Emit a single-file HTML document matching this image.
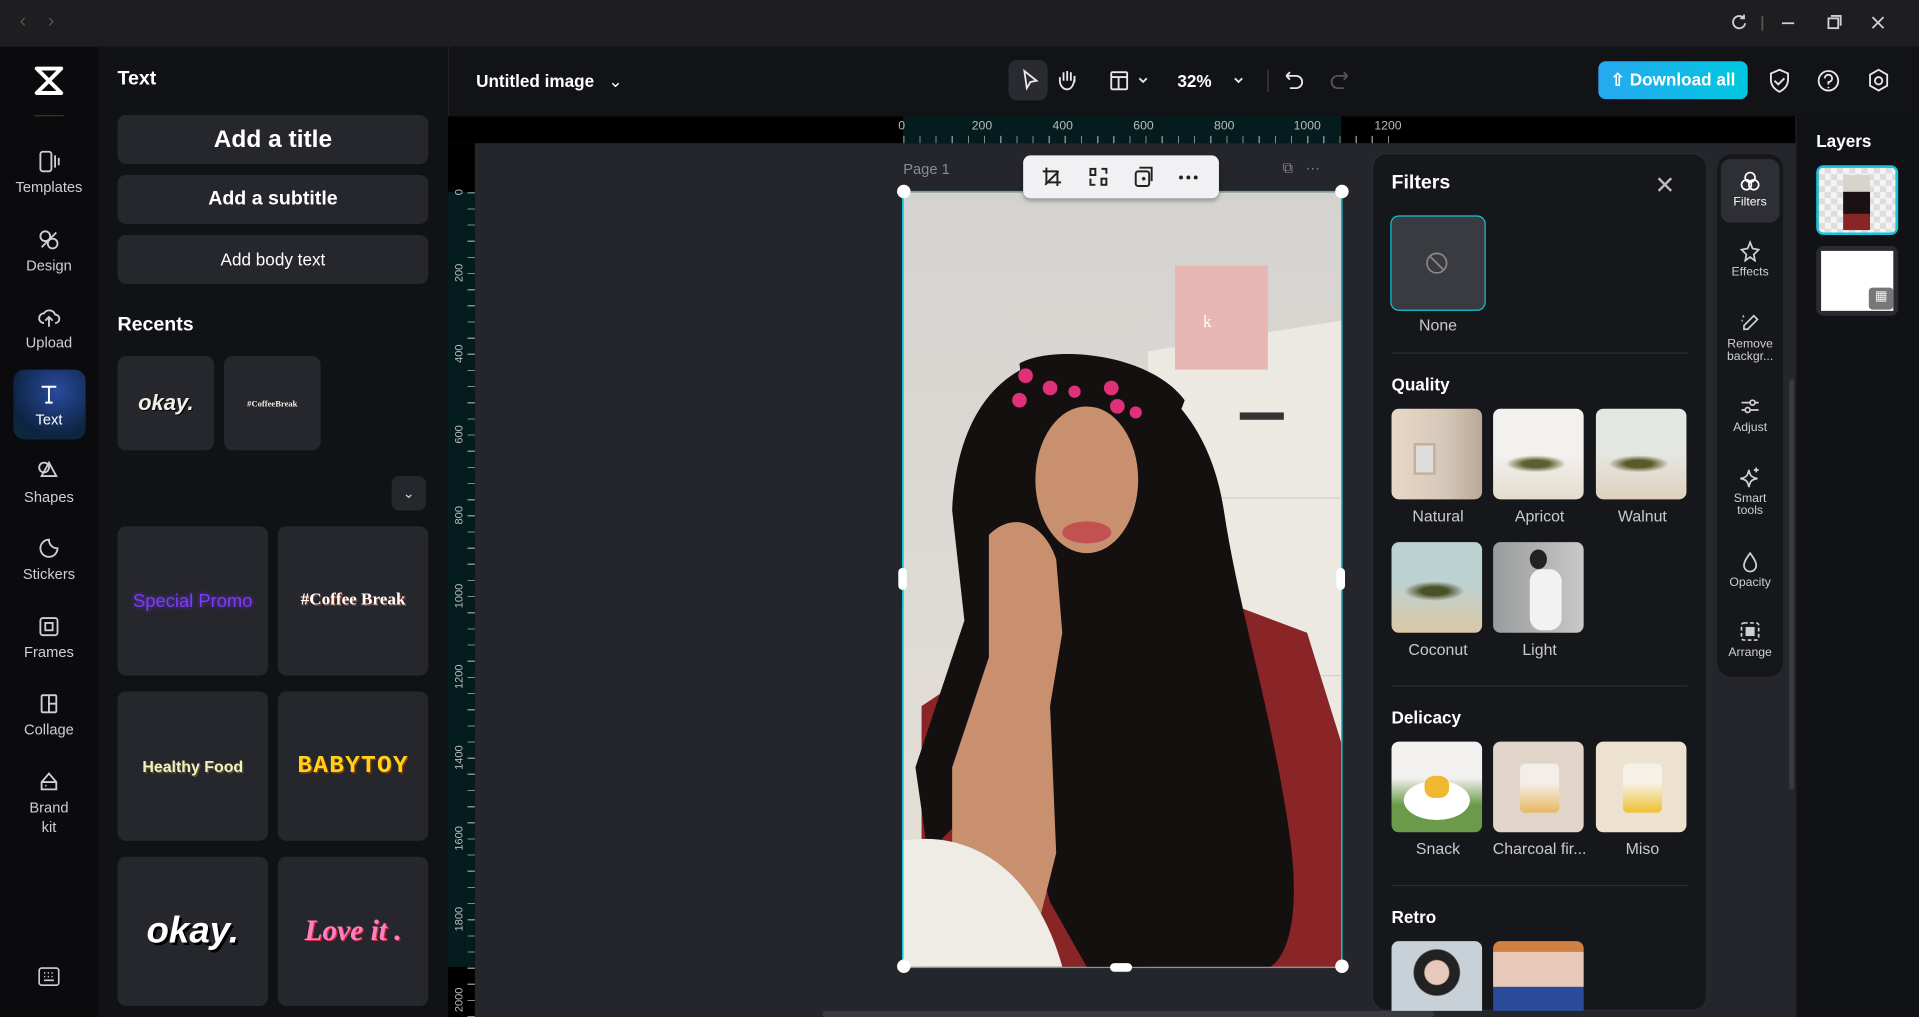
<!DOCTYPE html>
<html><head><meta charset="utf-8"><style>
*{box-sizing:border-box;margin:0;padding:0}
html,body{width:1919px;height:1017px;overflow:hidden;background:#25262b;font-family:"Liberation Sans",sans-serif;color:#e8e8ea}
#w{position:absolute;left:0;top:0;width:1568px;height:831px;overflow:hidden;transform:scale(1.22385);transform-origin:0 0;background:#25262b}
.a{position:absolute}
.rail .it{position:absolute;left:0;width:80px;text-align:center;font-size:12px;color:#cfd0d4}
.rail svg{display:block;margin:0 auto 4px}
.btn{position:absolute;left:96px;width:254px;height:40px;background:#26272c;border-radius:7px;display:flex;align-items:center;justify-content:center;color:#fff;font-weight:bold}
.card{position:absolute;background:#26272c;border-radius:7px;display:flex;align-items:center;justify-content:center}
.th{position:absolute;width:74px;height:74px;border-radius:6px;overflow:hidden}
.lb{position:absolute;width:84px;text-align:center;font-size:13px;color:#c9cacf}
.h{position:absolute;left:1137px;font-size:14px;font-weight:bold;color:#fff}
.tool{position:absolute;left:1403px;width:54px;text-align:center;font-size:10px;color:#cfd0d4;line-height:10px}
.tool svg{display:block;margin:0 auto 4px}
.vr{position:absolute;left:366px;width:18px;font-size:9px;color:#bbb;transform:rotate(-90deg);text-align:center}
</style></head><body><div id="w">
<!-- title bar -->
<div class="a" style="left:0;top:0;width:1568px;height:38px;background:#1e1e20"></div>
<div class="a" style="left:16px;top:9px;color:#555;font-size:16px">&#8249;&nbsp;&nbsp;&nbsp;&nbsp;&#8250;</div>
<svg class="a" style="left:1410px;top:10px" width="130" height="18" fill="none" stroke="#cfd0d4" stroke-width="1.5"><path d="M15 5a5 5 0 1 0 1 4M15 2v3h-3"/><path d="M30 3v12" stroke="#555"/><path d="M46 9h10"/><rect x="84" y="5" width="8" height="8"/><path d="M86 3h8v8"/><path d="M120 4l9 9M129 4l-9 9"/></svg>
<!-- left rail -->
<div class="a rail" style="left:0;top:38px;width:80px;height:793px;background:#0b0b0d">
<svg class="a" style="left:26px;top:15px" width="28" height="26" viewBox="0 0 28 26" fill="none" stroke="#fff" stroke-width="3.2" stroke-linejoin="round"><path d="M4 3h20L4 23h20z"/></svg>
<div class="a" style="left:28px;top:56px;width:24px;height:1px;background:#333"></div>
<div class="it" style="top:84px"><svg width="20" height="20" fill="none" stroke="#cfd0d4" stroke-width="1.5"><rect x="3" y="2" width="9" height="16" rx="2"/><path d="M15 5v10M18 7v6"/></svg>Templates</div>
<div class="it" style="top:148px"><svg width="20" height="20" fill="none" stroke="#cfd0d4" stroke-width="1.5"><circle cx="7" cy="7" r="4"/><circle cx="13" cy="13" r="4"/><path d="M4 16l12-12"/></svg>Design</div>
<div class="it" style="top:211px"><svg width="20" height="20" fill="none" stroke="#cfd0d4" stroke-width="1.5"><path d="M6 15a4 4 0 0 1 0-8 5 5 0 0 1 9 1 3.5 3.5 0 0 1 0 7M10 18V10M7 13l3-3 3 3"/></svg>Upload</div>
<div class="a" style="left:11px;top:264px;width:59px;height:57px;border-radius:9px;background:radial-gradient(circle at 60% 30%,#2a4aa0,#0d2440 70%,#0a2b3a)"></div>
<div class="it" style="top:274px;color:#fff"><svg width="20" height="20" fill="none" stroke="#fff" stroke-width="1.6"><path d="M4 4h12M10 4v13M7 17h6"/></svg>Text</div>
<div class="it" style="top:337px"><svg width="20" height="20" fill="none" stroke="#cfd0d4" stroke-width="1.5"><path d="M10 3l6 11H4z"/><circle cx="6" cy="7" r="4"/></svg>Shapes</div>
<div class="it" style="top:400px"><svg width="20" height="20" fill="none" stroke="#cfd0d4" stroke-width="1.5"><path d="M10 3a7 7 0 1 0 7 7c-4 0-7-3-7-7z"/></svg>Stickers</div>
<div class="it" style="top:464px"><svg width="20" height="20" fill="none" stroke="#cfd0d4" stroke-width="1.5"><rect x="3" y="3" width="14" height="14" rx="2"/><rect x="7" y="7" width="6" height="6"/></svg>Frames</div>
<div class="it" style="top:527px"><svg width="20" height="20" fill="none" stroke="#cfd0d4" stroke-width="1.5"><rect x="4" y="3" width="12" height="14" rx="1"/><path d="M10 3v14M10 10h6"/></svg>Collage</div>
<div class="it" style="top:590px;line-height:16px"><svg width="20" height="20" fill="none" stroke="#cfd0d4" stroke-width="1.5"><path d="M4 11l6-7 6 7v6H4zM4 11h12M7 14h1"/></svg>Brand<br>kit</div>
<svg class="a" style="left:31px;top:752px" width="18" height="16" fill="none" stroke="#cfd0d4" stroke-width="1.3"><rect x="1" y="1" width="16" height="14" rx="2"/><path d="M5 5h1M8 5h1M11 5h1M5 8h1M8 8h1M11 8h1M5 11h8"/></svg>
</div>
<!-- text panel -->
<div class="a" style="left:80px;top:38px;width:286px;height:793px;background:#111215"></div>
<div class="a" style="left:96px;top:56px;font-size:16px;font-weight:bold;color:#fff">Text</div>
<div class="btn" style="top:94px;font-size:20px">Add a title</div>
<div class="btn" style="top:143px;font-size:16px">Add a subtitle</div>
<div class="btn" style="top:192px;font-size:14px;font-weight:normal">Add body text</div>
<div class="a" style="left:96px;top:257px;font-size:16px;font-weight:bold;color:#fff">Recents</div>
<div class="card" style="left:96px;top:291px;width:79px;height:77px;font:italic bold 18px 'Liberation Sans';color:#f3efe6;text-shadow:1px 1px 0 #000">okay.</div>
<div class="card" style="left:183px;top:291px;width:79px;height:77px;font:bold 7px 'Liberation Serif';color:#f3efe6">#CoffeeBreak</div>
<div class="card" style="left:320px;top:389px;width:28px;height:28px;border-radius:6px;color:#ccc;font-size:12px">&#8964;</div>
<div class="card" style="left:96px;top:430px;width:123px;height:122px;color:#7a3df0;font-size:15px;text-shadow:0 0 4px #6a2ee0">Special Promo</div>
<div class="card" style="left:227px;top:430px;width:123px;height:122px;font:bold 14px 'Liberation Serif';color:#fff;text-shadow:1px 1px 0 #7a3a2a">#Coffee Break</div>
<div class="card" style="left:96px;top:565px;width:123px;height:122px;font:bold 13px 'Liberation Sans';color:#f5f0c0;text-shadow:1px 1px 0 #553">Healthy Food</div>
<div class="card" style="left:227px;top:565px;width:123px;height:122px;font:bold 20px 'Liberation Mono';color:#ffd21a;text-shadow:1px 1px 0 #8a3c00;letter-spacing:1px">BABYTOY</div>
<div class="card" style="left:96px;top:700px;width:123px;height:122px;font:italic bold 30px 'Liberation Sans';color:#fff;text-shadow:2px 2px 0 #000">okay.</div>
<div class="card" style="left:227px;top:700px;width:123px;height:122px;font:italic bold 24px 'Liberation Serif';color:#ff7fc0;text-shadow:1px 1px 0 #d02a40">Love it .</div>
<!-- top toolbar -->
<div class="a" style="left:366px;top:38px;width:1202px;height:57px;background:#121316;border-left:1px solid #222"></div>
<div class="a" style="left:389px;top:58px;font-size:14px;font-weight:bold;color:#fff">Untitled image &nbsp;&nbsp;<span style="font-weight:normal">&#8964;</span></div>
<div class="a" style="left:824px;top:49px;width:32px;height:33px;border-radius:7px;background:#2a2b30"></div>
<svg class="a" style="left:830px;top:55px" width="220" height="22" fill="none" stroke="#e8e8ea" stroke-width="1.5"><path d="M7 3l10 8-5 1-3 5z"/><path d="M42 18c-4 0-6-4-6-7V8m3 3V4m3 7V3m3 8V4m3 8V7c0 6-2 11-6 11" /><rect x="78" y="4" width="13" height="14" rx="1"/><path d="M78 8h13M84 8v10M101 9l3 3 3-3"/><path d="M179 9l3 3 3-3"/><path d="M206 2v18" stroke="#333"/></svg>
<div class="a" style="left:962px;top:58px;font-size:14px;font-weight:bold;color:#fff">32%</div>
<svg class="a" style="left:1046px;top:55px" width="60" height="22" fill="none" stroke-width="1.5"><path d="M5 7h8a5 5 0 0 1 0 10H8M5 7l3-3M5 7l3 3" stroke="#e8e8ea"/><path d="M55 7h-8a5 5 0 0 0 0 10h5M55 7l-3-3M55 7l-3 3" stroke="#555"/></svg>
<div class="a" style="left:1306px;top:50px;width:122px;height:31px;border-radius:6px;background:linear-gradient(90deg,#27a8ef,#00c8e0);color:#fff;font-size:14px;font-weight:bold;display:flex;align-items:center;justify-content:center">&#8679;&nbsp;Download all</div>
<svg class="a" style="left:1442px;top:54px" width="105" height="24" fill="none" stroke="#e8e8ea" stroke-width="1.5"><path d="M12 3l7 3v5c0 5-3 8-7 10-4-2-7-5-7-10V6z M8 12l3 3 5-5"/><circle cx="52" cy="12" r="8"/><path d="M49 10a3 3 0 1 1 3 3v2M52 17v1"/><path d="M93 3l7 4v9l-7 4-7-4V7z"/><circle cx="93" cy="12" r="3"/></svg>
<!-- rulers -->
<div class="a" style="left:366px;top:95px;width:1101px;height:22px;background:#000"></div>
<div class="a" style="left:738px;top:95px;width:358px;height:22px;background:#041c1e"></div>
<div class="a" style="left:366px;top:117px;width:22px;height:714px;background:#000"></div>
<div class="a" style="left:366px;top:157px;width:22px;height:633px;background:#041c1e"></div>
<div class="a" style="left:734px;top:98px;font-size:10px;color:#bbb">0<span style="position:absolute;left:60px">200</span><span style="position:absolute;left:126px">400</span><span style="position:absolute;left:192px">600</span><span style="position:absolute;left:258px">800</span><span style="position:absolute;left:323px">1000</span><span style="position:absolute;left:389px">1200</span></div>
<div class="a" style="left:738px;top:111px;width:400px;height:6px;background:repeating-linear-gradient(90deg,#888 0 1px,transparent 1px 13.2px)"></div>
<div class="a" style="left:382px;top:157px;width:6px;height:674px;background:repeating-linear-gradient(180deg,#888 0 1px,transparent 1px 13.2px)"></div>
<div class="vr" style="top:152px">0</div>
<div class="vr" style="top:218px">200</div>
<div class="vr" style="top:284px">400</div>
<div class="vr" style="top:350px">600</div>
<div class="vr" style="top:416px">800</div>
<div class="vr" style="top:482px;left:363px;width:24px">1000</div>
<div class="vr" style="top:548px;left:363px;width:24px">1200</div>
<div class="vr" style="top:614px;left:363px;width:24px">1400</div>
<div class="vr" style="top:680px;left:363px;width:24px">1600</div>
<div class="vr" style="top:746px;left:363px;width:24px">1800</div>
<div class="vr" style="top:812px;left:363px;width:24px">2000</div>
<!-- canvas -->
<div class="a" style="left:738px;top:131px;font-size:12px;color:#8a8b90">Page 1</div>
<div class="a" style="left:1048px;top:130px;font-size:12px;color:#8a8b90">&#10697; &nbsp;&nbsp;&middot;&middot;&middot;</div>
<div class="a" style="left:737px;top:156px;width:360px;height:635px;border:1.5px solid #16c3d8;overflow:hidden">
<svg width="358" height="633" viewBox="0 0 358 633">
<defs><linearGradient id="wall" x1="0" y1="0" x2="0" y2="1"><stop offset="0" stop-color="#d5d3d0"/><stop offset="1" stop-color="#e6e1d8"/></linearGradient></defs>
<rect width="358" height="633" fill="url(#wall)"/>
<path d="M200 130L358 105V633H200z" fill="#ece9e3"/><path d="M200 250H358M200 395H358" stroke="#d2cfc8"/>
<rect x="222" y="60" width="76" height="85" fill="#e7b7b3"/><text x="245" y="110" font-size="14" fill="#fff" font-family="Liberation Serif">k</text>
<rect x="275" y="180" width="36" height="6" fill="#333"/>
<path d="M15 420L90 370 250 330 330 360 358 450V633H15z" fill="#8a2527"/>
<path d="M140 420L200 410 215 560 150 590z" fill="#d84a2a"/><path d="M150 460L205 455 210 520 158 525z" fill="#f0a030"/>
<path d="M40 260C45 160 100 130 150 135S250 180 262 260 300 420 315 520 300 633 300 633H150L120 580 90 470 20 540 10 470 50 350z" fill="#141010"/>
<ellipse cx="150" cy="235" rx="42" ry="60" fill="#c8906e"/>
<path d="M95 140C120 125 200 130 230 170L215 210C190 175 140 165 100 185z" fill="#141010"/>
<ellipse cx="150" cy="278" rx="20" ry="9" fill="#c25252"/>
<path d="M70 280C90 260 115 270 125 300L130 360 120 420 125 540 110 600 40 590 40 470 70 380z" fill="#c8906e"/>
<path d="M0 530C60 520 110 560 130 633H0z" fill="#efece6"/>
<g fill="#e0307a"><circle cx="100" cy="150" r="6"/><circle cx="120" cy="160" r="6"/><circle cx="140" cy="163" r="5"/><circle cx="170" cy="160" r="6"/><circle cx="175" cy="175" r="6"/><circle cx="190" cy="180" r="5"/><circle cx="95" cy="170" r="6"/></g>
</svg></div>
<div class="a" style="left:733px;top:151px;width:11px;height:11px;border-radius:50%;background:#fff"></div>
<div class="a" style="left:1091px;top:151px;width:11px;height:11px;border-radius:50%;background:#fff"></div>
<div class="a" style="left:733px;top:784px;width:11px;height:11px;border-radius:50%;background:#fff"></div>
<div class="a" style="left:1091px;top:784px;width:11px;height:11px;border-radius:50%;background:#fff"></div>
<div class="a" style="left:734px;top:464px;width:7px;height:18px;border-radius:4px;background:#fff"></div>
<div class="a" style="left:1092px;top:464px;width:7px;height:18px;border-radius:4px;background:#fff"></div>
<div class="a" style="left:907px;top:787px;width:18px;height:7px;border-radius:4px;background:#fff"></div>
<div class="a" style="left:836px;top:127px;width:160px;height:35px;border-radius:6px;background:#f1f1f3;box-shadow:0 2px 4px rgba(0,0,0,.3)"></div>
<svg class="a" style="left:850px;top:135px" width="135" height="20" fill="none" stroke="#222" stroke-width="1.6"><path d="M5 2v12h12M2 5h12v12M4 16l11-11"/><rect x="41" y="3" width="4" height="5"/><rect x="50" y="11" width="4" height="5"/><path d="M41 11v5h4M50 3h4v4"/><rect x="78" y="5" width="11" height="12" rx="2"/><path d="M81 2h10v11M83 11h3M84.5 9.5v3"/><g fill="#222" stroke="none"><circle cx="115" cy="10" r="1.6"/><circle cx="121" cy="10" r="1.6"/><circle cx="127" cy="10" r="1.6"/></g></svg>
<div class="a" style="left:672px;top:826px;width:500px;height:5px;background:#3a3b40;border-radius:3px"></div>
<!-- filters panel -->
<div class="a" style="left:1121px;top:125px;width:274px;height:701px;border-radius:12px;background:#16171b;border:1px solid #2a2b30"></div>
<div class="h" style="top:141px;font-size:16px">Filters</div>
<div class="a" style="left:1352px;top:139px;font-size:20px;color:#bbb;font-weight:lighter">&#x2715;</div>
<div class="a" style="left:1136px;top:176px;width:78px;height:78px;border:1.5px solid #16c3d8;border-radius:7px;background:#3a3b40"></div>
<svg class="a" style="left:1164px;top:205px" width="20" height="20" fill="none" stroke="#888" stroke-width="1.4"><circle cx="10" cy="10" r="8"/><path d="M4.5 4.5l11 11"/></svg>
<div class="lb" style="left:1133px;top:258px">None</div>
<div class="a" style="left:1137px;top:288px;width:242px;height:1px;background:#2a2b30"></div>
<div class="h" style="top:306px">Quality</div>
<div class="th" style="left:1137px;top:334px;background:linear-gradient(90deg,#e8d8c8,#d5c7b8 60%,#b8a898)"><div class="a" style="left:18px;top:28px;width:18px;height:26px;border:2px solid #c4b094;background:#ddd"></div></div>
<div class="th" style="left:1220px;top:334px;background:linear-gradient(#f2f1ee 50%,#e5dccd)"><div class="a" style="left:10px;top:38px;width:50px;height:14px;background:radial-gradient(#5a6030 30%,transparent 70%)"></div></div>
<div class="th" style="left:1304px;top:334px;background:linear-gradient(#e4e6e2 50%,#e0d2bd)"><div class="a" style="left:10px;top:38px;width:50px;height:14px;background:radial-gradient(#5a5a28 30%,transparent 70%)"></div></div>
<div class="lb" style="left:1133px;top:414px">Natural</div><div class="lb" style="left:1216px;top:414px">Apricot</div><div class="lb" style="left:1300px;top:414px">Walnut</div>
<div class="th" style="left:1137px;top:443px;background:linear-gradient(#bcd2d0 45%,#dcc7a6)"><div class="a" style="left:10px;top:32px;width:50px;height:16px;background:radial-gradient(#4a5028 30%,transparent 70%)"></div></div>
<div class="th" style="left:1220px;top:443px;background:linear-gradient(90deg,#9a9b9c,#c8c8c8)"><div class="a" style="left:30px;top:22px;width:26px;height:50px;border-radius:10px;background:#f2f2f2"></div><div class="a" style="left:30px;top:6px;width:14px;height:16px;border-radius:50%;background:#222"></div></div>
<div class="lb" style="left:1133px;top:523px">Coconut</div><div class="lb" style="left:1216px;top:523px">Light</div>
<div class="a" style="left:1137px;top:560px;width:242px;height:1px;background:#2a2b30"></div>
<div class="h" style="top:578px">Delicacy</div>
<div class="th" style="left:1137px;top:606px;background:linear-gradient(#f2f1f0 40%,#6a9a4a 70%)"><div class="a" style="left:10px;top:32px;width:54px;height:32px;border-radius:50%;background:#fff"></div><div class="a" style="left:27px;top:28px;width:20px;height:18px;border-radius:40%;background:#f0b830"></div></div>
<div class="th" style="left:1220px;top:606px;background:#e1d4c8"><div class="a" style="left:22px;top:18px;width:32px;height:40px;border-radius:4px;background:linear-gradient(#f3efe8 40%,#e8b860)"></div></div>
<div class="th" style="left:1304px;top:606px;background:#ede2d0"><div class="a" style="left:22px;top:18px;width:32px;height:40px;border-radius:4px;background:linear-gradient(#f6f1e6 40%,#f0c030)"></div></div>
<div class="lb" style="left:1133px;top:686px">Snack</div><div class="lb" style="left:1216px;top:686px">Charcoal fir...</div><div class="lb" style="left:1300px;top:686px">Miso</div>
<div class="a" style="left:1137px;top:723px;width:242px;height:1px;background:#2a2b30"></div>
<div class="h" style="top:741px">Retro</div>
<div class="th" style="left:1137px;top:769px;height:57px;border-radius:6px 6px 0 0;background:radial-gradient(circle at 50% 45%,#e8c8b8 20%,#222 22%,#222 38%,#c8d0d8 40%)"></div>
<div class="th" style="left:1220px;top:769px;height:57px;border-radius:6px 6px 0 0;background:linear-gradient(#d08040 15%,#e8c8b8 16% 65%,#2a4a9a 66%)"></div>
<!-- right tool rail -->
<div class="a" style="left:1403px;top:126px;width:54px;height:427px;border-radius:12px;background:#16171b"></div>
<div class="a" style="left:1406px;top:130px;width:48px;height:52px;border-radius:8px;background:#2e2f34"></div>
<div class="tool" style="top:139px;color:#fff"><svg width="18" height="18" fill="none" stroke="#fff" stroke-width="1.4"><circle cx="9" cy="6" r="4"/><circle cx="6" cy="12" r="4"/><circle cx="12" cy="12" r="4"/></svg>Filters</div>
<div class="tool" style="top:196px"><svg width="18" height="18" fill="none" stroke="#cfd0d4" stroke-width="1.4"><path d="M9 2l2 5 5 1-4 4 1 5-4-3-4 3 1-5-4-4 5-1z"/></svg>Effects</div>
<div class="tool" style="top:255px"><svg width="18" height="18" fill="none" stroke="#cfd0d4" stroke-width="1.4"><path d="M12 3l3 3-8 8H4v-3z M3 3l1 1M2 7h1"/></svg>Remove<br>backgr...</div>
<div class="tool" style="top:323px"><svg width="18" height="18" fill="none" stroke="#cfd0d4" stroke-width="1.4"><path d="M2 6h14M2 12h14"/><circle cx="11" cy="6" r="2" fill="#16171b"/><circle cx="7" cy="12" r="2" fill="#16171b"/></svg>Adjust</div>
<div class="tool" style="top:381px"><svg width="18" height="18" fill="none" stroke="#cfd0d4" stroke-width="1.4"><path d="M8 3c1 5 2 6 7 7-5 1-6 2-7 7-1-5-2-6-7-7 5-1 6-2 7-7zM14 1v4M12 3h4"/></svg>Smart<br>tools</div>
<div class="tool" style="top:450px"><svg width="18" height="18" fill="none" stroke="#cfd0d4" stroke-width="1.4"><path d="M9 2c3 4 5 7 5 10a5 5 0 0 1-10 0c0-3 2-6 5-10z"/></svg>Opacity</div>
<div class="tool" style="top:507px"><svg width="18" height="18" fill="none" stroke="#cfd0d4" stroke-width="1.4" stroke-dasharray="3 2"><rect x="2" y="2" width="14" height="14" rx="2"/><rect x="6" y="6" width="6" height="6" fill="#cfd0d4" stroke-dasharray="0"/></svg>Arrange</div>
<div class="a" style="left:1462px;top:310px;width:4px;height:335px;border-radius:2px;background:#3a3b40"></div>
<!-- layers -->
<div class="a" style="left:1467px;top:95px;width:101px;height:736px;background:#111215;border-left:1px solid #222"></div>
<div class="a" style="left:1484px;top:107px;font-size:14px;font-weight:bold;color:#fff">Layers</div>
<div class="a" style="left:1484px;top:135px;width:67px;height:57px;border:2px solid #16c3d8;border-radius:6px;background:repeating-conic-gradient(#ddd 0 25%,#f4f4f4 0 50%) 0 0/10px 10px;overflow:hidden"><div class="a" style="left:20px;top:6px;width:22px;height:45px;background:linear-gradient(#d8d4cc 30%,#1a1212 31% 70%,#8a2527 71%)"></div></div>
<div class="a" style="left:1484px;top:201px;width:67px;height:57px;border-radius:6px;background:#2a2b30;padding:4px"><div style="width:100%;height:100%;background:#fff"></div></div>
<div class="a" style="left:1527px;top:235px;width:20px;height:18px;border-radius:3px;background:#777;color:#eee;font-size:11px;text-align:center">&#9638;</div>
</div></body></html>
